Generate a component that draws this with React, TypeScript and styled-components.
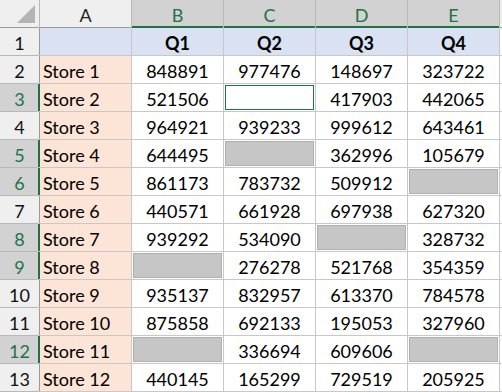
import React from "react";
import styled, { createGlobalStyle, css } from "styled-components";

const GREEN = "#217346";
const HEADER_BG = "#efefef";
const HEADER_SEL_BG = "#d2d2d2";
const HEADER_LINE = "#b8b8b8";
const GRID_LINE = "#c8c8c8";

const Global = createGlobalStyle`
  html, body { margin: 0; padding: 0; background: #ffffff; }
  body { font-family: Lato, "Open Sans", sans-serif; }
`;

const Sheet = styled.div`
  display: grid;
  grid-template-columns: 39px repeat(5, 91px) 1fr;
  grid-auto-rows: 27px;
  gap: 1px;
  width: 502px;
  height: 392px;
  overflow: hidden;
  background: ${GRID_LINE};
  font-family: Lato, "Open Sans", sans-serif;
  font-size: 18px;
  color: #000000;
`;

const Corner = styled.div`
  background: ${HEADER_BG};
  position: relative;
  box-shadow: 1px 0 0 ${HEADER_LINE}, 0 1px 0 #9a9a9a;
`;

const CornerTri = styled.svg`
  position: absolute;
  left: 0;
  top: 0;
`;

const ColHead = styled.div<{ $sel?: boolean }>`
  display: flex;
  align-items: center;
  justify-content: center;
  padding-top: 2px;
  box-sizing: border-box;
  background: ${(p) => (p.$sel ? HEADER_SEL_BG : HEADER_BG)};
  color: ${(p) => (p.$sel ? GREEN : "#222222")};
  font-size: 18px;
  box-shadow: ${(p) =>
    p.$sel
      ? `inset 0 -1px 0 ${GREEN}, 0 1px 0 ${GREEN}, 1px 0 0 ${HEADER_LINE}`
      : `0 1px 0 #9a9a9a, 1px 0 0 ${HEADER_LINE}`};
`;

const RowHead = styled.div<{ $sel?: boolean }>`
  display: flex;
  align-items: center;
  justify-content: center;
  padding-top: 3px;
  box-sizing: border-box;
  background: ${(p) => (p.$sel ? HEADER_SEL_BG : HEADER_BG)};
  color: ${(p) => (p.$sel ? GREEN : "#111111")};
  font-size: 18px;
  box-shadow: ${(p) =>
    p.$sel
      ? `inset -1px 0 0 ${GREEN}, 1px 0 0 ${GREEN}, 0 1px 0 ${HEADER_LINE}`
      : `1px 0 0 #9a9a9a, 0 1px 0 ${HEADER_LINE}`};
`;

const Cell = styled.div<{ $tone?: "label" | "head" | "plain"; $align?: "left" | "center" }>`
  display: flex;
  align-items: center;
  justify-content: ${(p) => (p.$align === "left" ? "flex-start" : "center")};
  padding: 3px 0 0 ${(p) => (p.$align === "left" ? "3px" : "0")};
  box-sizing: border-box;
  position: relative;
  background: ${(p) =>
    p.$tone === "label" ? "#fce4d6" : p.$tone === "head" ? "#d9e1f2" : "#ffffff"};
  ${(p) =>
    p.$tone === "head" &&
    css`
      font-weight: 700;
    `}
`;

const Shade = styled.div<{ $active?: boolean }>`
  position: absolute;
  inset: 1px 1px 1px 1px;
  box-sizing: border-box;
  background: ${(p) => (p.$active ? "#ffffff" : "#c6c6c6")};
  border: 1px solid ${(p) => (p.$active ? GREEN : "#b0b0b0")};
`;

type V = number | "sel" | "act";
const rows: [string, V, V, V, V][] = [
  ["Store 1", 848891, 977476, 148697, 323722],
  ["Store 2", 521506, "act", 417903, 442065],
  ["Store 3", 964921, 939233, 999612, 643461],
  ["Store 4", 644495, "sel", 362996, 105679],
  ["Store 5", 861173, 783732, 509912, "sel"],
  ["Store 6", 440571, 661928, 697938, 627320],
  ["Store 7", 939292, 534090, "sel", 328732],
  ["Store 8", "sel", 276278, 521768, 354359],
  ["Store 9", 935137, 832957, 613370, 784578],
  ["Store 10", 875858, 692133, 195053, 327960],
  ["Store 11", "sel", 336694, 609606, "sel"],
  ["Store 12", 440145, 165299, 729519, 205925],
];

export default function App() {
  return (
    <>
      <Global />
      <Sheet>
        <Corner>
          <CornerTri width="39" height="27" viewBox="0 0 39 27">
            <polygon points="35,5 35,23 17,23" fill="#b4b4b4" />
          </CornerTri>
        </Corner>
        <ColHead>A</ColHead>
        {["B", "C", "D", "E"].map((c) => (
          <ColHead key={c} $sel>
            {c}
          </ColHead>
        ))}
        <ColHead />

        <RowHead>1</RowHead>
        <Cell $tone="head" />
        {["Q1", "Q2", "Q3", "Q4"].map((q) => (
          <Cell key={q} $tone="head">
            {q}
          </Cell>
        ))}
        <Cell />

        {rows.map((r, i) => {
          const vals = r.slice(1) as V[];
          const sel = vals.some((v) => v === "sel" || v === "act");
          return (
            <React.Fragment key={r[0]}>
              <RowHead $sel={sel}>{i + 2}</RowHead>
              <Cell $tone="label" $align="left">
                {r[0]}
              </Cell>
              {vals.map((v, j) => (
                <Cell key={j}>
                  {v === "sel" ? <Shade /> : v === "act" ? <Shade $active /> : v}
                </Cell>
              ))}
              <Cell />
            </React.Fragment>
          );
        })}
      </Sheet>
    </>
  );
}
